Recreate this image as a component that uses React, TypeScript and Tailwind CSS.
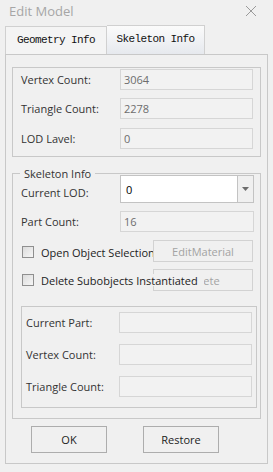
import React from "react";

const ui = { fontFamily: '"Open Sans", "Noto Sans", sans-serif' };
const mono = { fontFamily: '"Liberation Mono", "DejaVu Sans Mono", monospace' };

function Field({ label, value, top = 0, labelX = 8, labelW = 107, width = 133 }: { label: string; value?: string; top?: number; labelX?: number; labelW?: number; width?: number }) {
  return (
    <div className="flex items-center h-[21px]" style={{ marginTop: top }}>
      <div className="text-[11px] text-[#333] leading-none shrink-0" style={{ width: labelW, paddingLeft: labelX }}>
        {label}
      </div>
      <div
        className="h-[21px] shrink-0 border border-[#d6d6d6] bg-[#f2f2f2] flex items-center pl-[3px] text-[11px] text-[#6d6d6d] leading-none"
        style={{ width }}
      >
        {value}
      </div>
    </div>
  );
}

function Box() {
  return <div className="w-[12px] h-[12px] shrink-0 border border-[#8f8f8f] bg-gradient-to-br from-[#dcdcdc] to-[#f6f6f6]" />;
}

export default function App() {
  return (
    <div className="w-[273px] h-[472px] bg-[#f0f0f0] overflow-hidden" style={ui}>
      {/* title bar */}
      <div className="flex items-center justify-between h-[25px] pl-[9px] pr-[16px]">
        <span className="text-[13px] text-[#a6a6a6] leading-none -mt-[2px]">Edit Model</span>
        <svg width="12" height="12" viewBox="0 0 12 12" className="-mt-[3px]">
          <path d="M1 1 L11 11 M11 1 L1 11" stroke="#9a9a9a" strokeWidth="1" fill="none" />
        </svg>
      </div>

      {/* tabs */}
      <div className="flex items-end h-[29px] pl-[5px] text-[11px] tracking-[-0.6px] text-[#111]" style={mono}>
        <div className="w-[102px] h-[28px] border border-b-0 border-[#d0d0d0] bg-[#f4f4f4] flex items-center justify-center">
          Geometry Info
        </div>
        <div className="w-[98px] h-[29px] border border-b-0 border-l-0 border-[#d0d0d0] bg-gradient-to-b from-[#fbfbfb] to-[#e6e9ee] flex items-center justify-center pb-[2px]">
          Skeleton Info
        </div>
      </div>

      {/* panel */}
      <div className="mx-[5px] h-[410px] border border-[#c8c8c8] pt-[12px] pl-[6px]">
        {/* group 1 */}
        <div className="w-[249px] h-[90px] border border-[#c8c8c8] pt-[1px]">
          <Field label="Vertex Count:" value="3064" />
          <Field label="Triangle Count:" value="2278" top={8} />
          <Field label="LOD Lavel:" value="0" top={9} />
        </div>

        {/* group 2 */}
        <div className="relative w-[249px] h-[246px] border border-[#c8c8c8] mt-[16px]">
          <span className="absolute -top-[8px] left-[7px] px-[4px] bg-[#f0f0f0] text-[11px] text-[#333] leading-[16px]">
            Skeleton Info
          </span>
          <div className="flex items-center h-[28px] mt-[1px]">
            <div className="w-[107px] shrink-0 pl-[8px] pt-[6px] text-[11px] text-[#333] leading-none">Current LOD:</div>
            <div className="w-[134px] h-[28px] border border-[#c3c3c3] bg-white flex">
              <div className="flex-1 flex items-center pl-[5px] text-[11px] text-black leading-none">0</div>
              <div className="w-[16px] border-l border-[#c3c3c3] bg-[#f0f0f0] flex items-center justify-center">
                <svg width="7" height="4" viewBox="0 0 7 4">
                  <path d="M0 0 H7 L3.5 4 Z" fill="#6d6d6d" />
                </svg>
              </div>
            </div>
          </div>
          <Field label="Part Count:" value="16" top={8} width={134} />

          {/* checkbox rows */}
          <div className="relative h-[22px] mt-[8px]">
            <div className="absolute left-[9px] top-[6px] flex items-center gap-[7px]">
              <Box />
              <span className="text-[11px] text-[#222] leading-none whitespace-nowrap">Open Object Selection</span>
            </div>
            <div className="absolute left-[140px] top-0 w-[100px] h-[22px] border border-[#d2d2d2] bg-[#f0f0f0] flex items-center justify-center text-[11px] text-[#a3a3a3] leading-none">
              EditMaterial
            </div>
          </div>
          <div className="relative h-[22px] mt-[7px]">
            <div className="absolute left-[140px] top-0 w-[100px] h-[22px] border border-[#d2d2d2] bg-[#f0f0f0] flex items-center justify-center text-[11px] text-[#a3a3a3] leading-none">
              Delete
            </div>
            <div className="absolute left-[9px] top-[5px] flex items-center gap-[7px] bg-[#f0f0f0] pr-[6px]">
              <Box />
              <span className="text-[11px] text-[#222] leading-none whitespace-nowrap">Delete Subobjects Instantiated</span>
            </div>
          </div>

          {/* inner group */}
          <div className="ml-[8px] mt-[15px] w-[236px] h-[102px] border border-[#c8c8c8] pt-[5px]">
            <Field label="Current Part:" labelX={4} labelW={97} />
            <Field label="Vertex Count:" labelX={4} labelW={97} top={11} />
            <Field label="Triangle Count:" labelX={4} labelW={97} top={11} />
          </div>
        </div>

        {/* buttons */}
        <div className="flex mt-[7px] pl-[19px] gap-[36px]">
          <button className="w-[76px] h-[27px] border border-[#adadad] bg-[#f0f0f0] text-[11px] text-[#222] leading-none">
            OK
          </button>
          <button className="w-[76px] h-[27px] border border-[#adadad] bg-[#f0f0f0] text-[11px] text-[#222] leading-none">
            Restore
          </button>
        </div>
      </div>
    </div>
  );
}
